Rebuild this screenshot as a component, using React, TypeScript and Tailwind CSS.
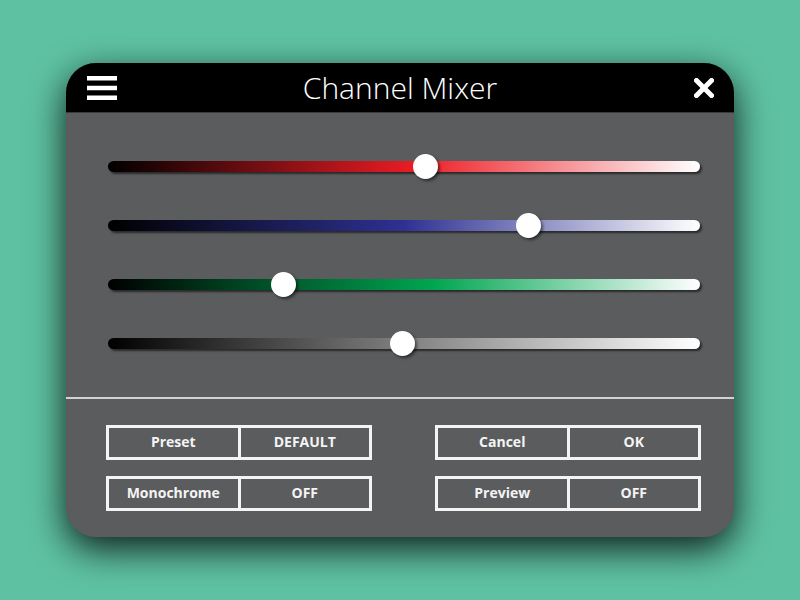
const sliders = [
  { value: 0.537, gradient: "bg-[linear-gradient(to_right,#000000_0%,#ed1c24_52%,#ffffff_100%)]" },
  { value: 0.71, gradient: "bg-[linear-gradient(to_right,#000000_0%,#2e3192_50%,#ffffff_100%)]" },
  { value: 0.297, gradient: "bg-[linear-gradient(to_right,#000000_0%,#00a651_55%,#ffffff_100%)]" },
  { value: 0.498, gradient: "bg-[linear-gradient(to_right,#000000_0%,#ffffff_100%)]" },
];

function Slider({ value, gradient }: { value: number; gradient: string }) {
  return (
    <div className="relative h-[25px] flex items-center">
      <div className={`w-full h-[11px] rounded-full shadow-[2px_2px_2px_rgba(0,0,0,0.55)] ${gradient}`} />
      <div
        className="absolute top-0 w-[25px] h-[25px] -ml-[12.5px] rounded-full bg-white shadow-[2px_2px_3px_rgba(0,0,0,0.5)]"
        style={{ left: `${value * 100}%` }}
      />
    </div>
  );
}

function ButtonPair({ left, right }: { left: string; right: string }) {
  return (
    <div className="flex w-[266px] h-[35px] border-[3px] border-[#f4f4f4] text-[14px] font-bold text-[#f4f4f4]">
      <div className="flex-1 flex items-center justify-center pb-[3px]">{left}</div>
      <div className="flex-1 flex items-center justify-center pb-[3px] border-l-[3px] border-[#f4f4f4]">{right}</div>
    </div>
  );
}

export default function App() {
  return (
    <div
      className="w-[800px] h-[600px] bg-[#5ec2a2] flex items-center justify-center"
      style={{ fontFamily: '"Open Sans", "Liberation Sans", sans-serif' }}
    >
      <div className="w-[668px] h-[474px] rounded-[30px] bg-[#5b5c5e] overflow-hidden flex flex-col shadow-[0_12px_36px_rgba(0,0,0,0.85)]">
        {/* Header */}
        <div className="h-[50px] bg-black flex items-center justify-between pl-[21px] pr-[21px] border-b border-[#3a3a3a]">
          <div className="w-[30px]">
            <svg width="30" height="24" viewBox="0 0 30 24">
              <rect x="0" y="0" width="30" height="4.5" fill="#fff" />
              <rect x="0" y="9.75" width="30" height="4.5" fill="#fff" />
              <rect x="0" y="19.5" width="30" height="4.5" fill="#fff" />
            </svg>
          </div>
          <h1 className="text-[30px] font-light text-white leading-none mt-[1px]">Channel Mixer</h1>
          <div className="w-[30px] flex justify-end">
            <svg width="20" height="20" viewBox="0 0 20 20" className="mr-[-1px]">
              <path d="M2.5 2.5 L17.5 17.5 M17.5 2.5 L2.5 17.5" stroke="#fff" strokeWidth="5" strokeLinecap="square" />
            </svg>
          </div>
        </div>

        {/* Sliders */}
        <div className="flex flex-col gap-[34px] pl-[42px] pr-[34px] pt-[41px] pb-[41px] border-b-2 border-[#d2d2d2]">
          {sliders.map((s, i) => (
            <Slider key={i} value={s.value} gradient={s.gradient} />
          ))}
        </div>

        {/* Buttons */}
        <div className="flex justify-between pl-[40px] pr-[33px] pt-[26px]">
          <div className="flex flex-col gap-[16px]">
            <ButtonPair left="Preset" right="DEFAULT" />
            <ButtonPair left="Monochrome" right="OFF" />
          </div>
          <div className="flex flex-col gap-[16px]">
            <ButtonPair left="Cancel" right="OK" />
            <ButtonPair left="Preview" right="OFF" />
          </div>
        </div>
      </div>
    </div>
  );
}
